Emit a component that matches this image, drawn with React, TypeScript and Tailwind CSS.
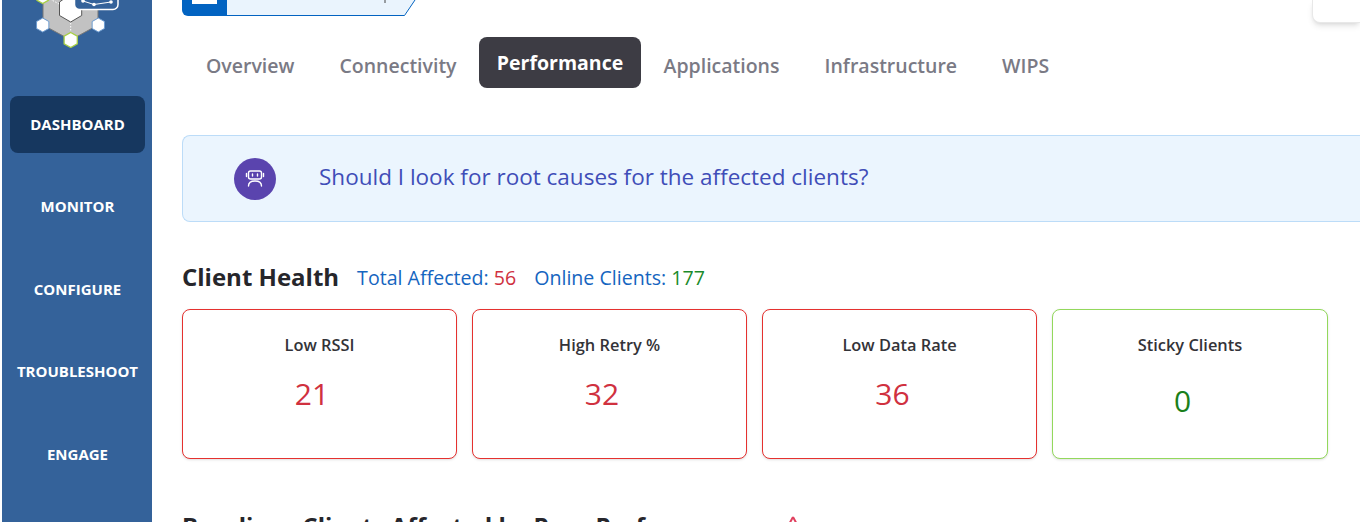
const navItems = ['DASHBOARD', 'MONITOR', 'CONFIGURE', 'TROUBLESHOOT', 'ENGAGE'];
const tabs = ['Overview', 'Connectivity', 'Performance', 'Applications', 'Infrastructure', 'WIPS'];

const healthCards = [
  { title: 'Low RSSI', value: 21, bad: true, shift: 'pr-[15px]', width: 'w-[275px]' },
  { title: 'High Retry %', value: 32, bad: true, shift: 'pr-[15px]', width: 'w-[275px]' },
  { title: 'Low Data Rate', value: 36, bad: true, shift: 'pr-[14px]', width: 'w-[275px]' },
  { title: 'Sticky Clients', value: 0, bad: false, shift: 'pr-[15px]', width: 'w-[276px]' },
];

const hex = (cx: number, cy: number, r: number) =>
  [
    [cx, cy - r],
    [cx + r * 0.88, cy - r / 2],
    [cx + r * 0.88, cy + r / 2],
    [cx, cy + r],
    [cx - r * 0.88, cy + r / 2],
    [cx - r * 0.88, cy - r / 2],
  ]
    .map((p) => p.join(','))
    .join(' ');

// viewBox is in page pixels, the sidebar starts at x=2
const Logo = () => (
  <svg width="150" height="48" viewBox="2 0 150 48" className="block">
    <polygon points="43,-4 98,-4 98,25 70.7,40 43,25" fill="#c2c2c2" stroke="#777" strokeWidth="1" />
    <polygon points="70.7,-6 81.7,2 81.7,15.5 70.7,22 59.5,15.5 59.5,2" fill="#fff" stroke="#555" strokeWidth="1" />
    <path d="M70.7 23V33M50 -1 59 4" stroke="#fff" strokeWidth="1" strokeDasharray="1.5 1.5" />
    <polygon points={hex(42.7, 25, 7)} fill="#fff" stroke="#6c9bd0" strokeWidth="1" />
    <polygon points={hex(98.3, 25, 7)} fill="#fff" stroke="#6c9bd0" strokeWidth="1" />
    <polygon points={hex(70.7, 40, 7.5)} fill="#fff" stroke="#a8cf45" strokeWidth="1.3" />
    <polygon points={hex(42.7, -3, 6.5)} fill="#fff" stroke="#a8cf45" strokeWidth="1.3" />
    <rect x="74.5" y="-12" width="43.5" height="21.5" rx="5" fill="#34629a" stroke="#fff" strokeWidth="1.5" />
    <path d="M83 1 94 4.5 111 2" stroke="#fff" strokeWidth="1" fill="none" />
    <circle cx="83" cy="1" r="1.8" fill="#fff" />
    <circle cx="94" cy="4.5" r="1.8" fill="#fff" />
    <circle cx="111" cy="2" r="1.8" fill="#fff" />
  </svg>
);

const Bot = () => (
  <svg width="24" height="24" viewBox="0 0 24 24" fill="none" stroke="#fff" strokeWidth="1.4" strokeLinecap="round">
    <rect x="5.5" y="4" width="13" height="8" rx="2" />
    <path d="M9.5 7v2M14.5 7v2" />
    <path d="M3.5 6.5v3M20.5 6.5v3" />
    <path d="M5.5 19c0-4 2.5-5 6.5-5s6.5 1 6.5 5" />
  </svg>
);

export default function App() {
  return (
    <div className="flex h-[522px] w-[1360px] overflow-hidden bg-white font-['Open_Sans',sans-serif]">
      <aside className="ml-[2px] flex w-[150px] shrink-0 flex-col bg-[#34629a]">
        <div className="h-[96px]">
          <Logo />
        </div>
        <nav className="flex flex-col pl-2 pr-[7px]">
          {navItems.map((item, i) => (
            <a
              key={item}
              className={`mb-[25.5px] flex h-[57px] items-center justify-center rounded-lg pb-[1px] text-[15px] font-bold text-white ${
                i === 0 ? 'bg-[#16375f]' : ''
              }`}
            >
              {item}
            </a>
          ))}
        </nav>
      </aside>

      <main className="min-w-0 flex-1 pl-[30px]">
        <div className="flex h-[23px] items-start justify-between">
          <div className="flex h-[16px]">
            <div className="flex w-[45px] justify-center rounded-bl-md bg-[#0263c1]">
              <div className="h-[4px] w-[25px] bg-white" />
            </div>
            <svg width="189" height="16" viewBox="0 0 189 16" className="block">
              <polygon points="0,0 188,0 177,15 0,15" fill="#eaf4fd" />
              <path d="M0 15.5H177.5L188 0" fill="none" stroke="#0263c1" strokeWidth="1" />
              <path d="M158 0v3" stroke="#444" strokeWidth="1" />
            </svg>
          </div>
          <div className="h-[23px] w-[48px] rounded-bl-lg border-b border-l border-[#e8e8e8] bg-white shadow-md" />
        </div>

        <div className="mt-[14px] flex h-[51px] items-center pl-[1.5px] text-[19.5px] font-semibold text-[#7a7a85]">
          {tabs.map((tab) =>
            tab === 'Performance' ? (
              <button key={tab} className="h-[51px] w-[162px] rounded-lg bg-[#3d3c44] font-bold text-white">
                {tab}
              </button>
            ) : (
              <span key={tab} className="mx-[22.5px] pt-[7px]">
                {tab}
              </span>
            ),
          )}
        </div>

        <div className="mt-[47px] flex h-[87px] items-center rounded-l-lg border border-r-0 border-[#bcdcf8] bg-[#ebf5fe] pl-[51px]">
          <div className="flex h-[42px] w-[42px] items-center justify-center rounded-full bg-[#5a44ae]">
            <Bot />
          </div>
          <p className="ml-[43px] pb-[4px] text-[22.5px] text-[#3f4db8]">
            Should I look for root causes for the affected clients?
          </p>
        </div>

        <div className="mt-[39px] flex h-[34px] items-center">
          <h2 className="pb-[2px] text-2xl font-bold text-[#26262b]">Client Health</h2>
          <span className="ml-[18px] text-[19.6px] text-[#1565c0]">
            Total Affected: <span className="text-[#d0313f]">56</span>
          </span>
          <span className="ml-[18px] text-[19.6px] text-[#1565c0]">
            Online Clients: <span className="text-[#1b8a2a]">177</span>
          </span>
        </div>

        <div className="mt-[14px] flex gap-[15px]">
          {healthCards.map((card) => (
            <div
              key={card.title}
              className={`flex h-[150px] ${card.width} flex-col items-center rounded-lg border bg-white pt-[23px] shadow-sm ${
                card.bad ? 'border-[#e5312f]' : 'border-[#93d85c]'
              }`}
            >
              <div className="text-[16.4px] font-semibold text-[#333338]">{card.title}</div>
              <div
                className={`${card.shift} ${card.bad ? 'mt-[18px] text-[#d0313f]' : 'mt-[25px] text-[#1b7f1b]'} text-3xl`}
              >
                {card.value}
              </div>
            </div>
          ))}
        </div>

        <div className="mt-[51px] flex items-start">
          <h2 className="text-2xl font-bold text-[#26262b]">
            <span className="mr-[19px]">Baseline</span>Clients Affected by Poor Performance
          </h2>
          <svg width="14" height="12" viewBox="0 0 14 12" fill="none" stroke="#e0405f" strokeWidth="2" className="ml-[35px] mt-[6px]">
            <path d="M7 1 1 12M7 1l6 11" />
          </svg>
        </div>
      </main>
    </div>
  );
}
